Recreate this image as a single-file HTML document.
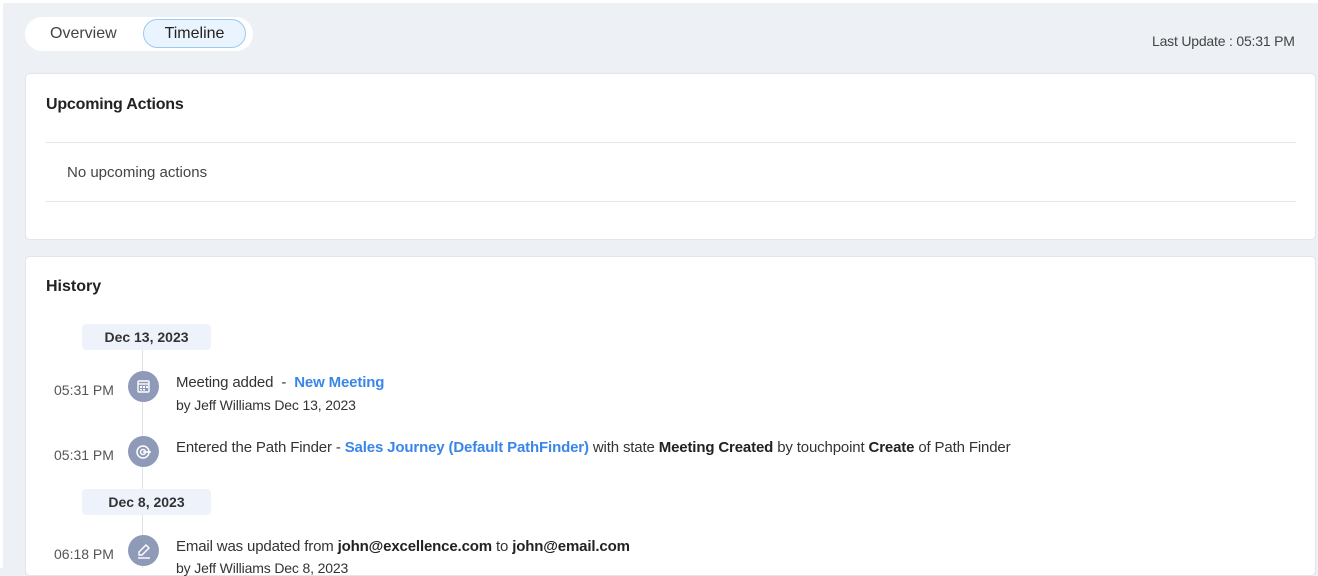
<!DOCTYPE html><html><head><style>
*{margin:0;padding:0;box-sizing:border-box}
body{width:1318px;height:568px;overflow:hidden;background:#edf0f5;font-family:"Liberation Sans",sans-serif;color:#222;position:relative}
.a{position:absolute;white-space:nowrap}
.card{position:absolute;left:25px;width:1291px;background:#fff;border:1px solid #e2e6ec;border-radius:5px}
.t{font-size:14px;color:#555}
.ic{position:absolute;left:128px;width:31px;height:31px;border-radius:50%;background:#8e9ab8}
.dt{position:absolute;left:82px;width:129px;height:26px;background:#eef3fb;border-radius:4px;font-size:14px;font-weight:bold;text-align:center;line-height:26px;color:#333}
.tx{font-size:15px;color:#333;letter-spacing:-0.15px}
b{color:#222}
.l{color:#3a86e8}
</style></head><body>
<div class="a" style="left:0;top:0;width:1318px;height:3px;background:#fff"></div>
<div class="a" style="left:0;top:0;width:3px;height:568px;background:#fff"></div>
<div class="a" style="left:25px;top:17px;width:228px;height:34px;background:#fff;border-radius:17px"></div>
<div class="a" style="left:50px;top:25px;font-size:16px;color:#444">Overview</div>
<div class="a" style="left:143px;top:19px;width:103px;height:29px;background:#eaf4fe;border:1px solid #9ccaf0;border-radius:15px;font-size:16px;text-align:center;line-height:28px;color:#222">Timeline</div>
<div class="a" style="left:1152px;top:33px;font-size:14px;color:#444;letter-spacing:-0.2px">Last Update : 05:31 PM</div>
<div class="card" style="top:73px;height:167px">
<div class="a" style="left:20px;top:22px;font-size:16px;font-weight:bold;letter-spacing:-0.2px">Upcoming Actions</div>
<div class="a" style="left:20px;top:68px;width:1250px;height:1px;background:#e2e6ec"></div>
<div class="a" style="left:41px;top:90px;font-size:15px;color:#444">No upcoming actions</div>
<div class="a" style="left:20px;top:127px;width:1250px;height:1px;background:#e2e6ec"></div>
</div>
<div class="card" style="top:256px;height:320px"></div>
<div class="a" style="left:46px;top:278px;font-size:16px;font-weight:bold">History</div>
<div class="a" style="left:142px;top:350px;width:1px;height:218px;background:#dde1e8"></div>
<div class="dt" style="top:324px">Dec 13, 2023</div>
<div class="a t" style="left:54px;top:382px">05:31 PM</div>
<div class="ic" style="top:371px"><svg width="31" height="31"><rect x="10" y="10" width="11" height="11" rx="1" fill="none" stroke="#fff" stroke-width="1.4"/><line x1="10" y1="13" x2="21" y2="13" stroke="#fff" stroke-width="1.4"/><g fill="#fff"><rect x="12" y="15" width="2" height="2"/><rect x="15" y="15" width="2" height="2"/><rect x="18" y="15" width="2" height="2"/><rect x="12" y="18" width="2" height="1.5"/><rect x="15" y="18" width="2" height="1.5"/></g></svg></div>
<div class="a tx" style="left:176px;top:374px">Meeting added &nbsp;- &nbsp;<span class="l" style="font-weight:bold">New Meeting</span></div>
<div class="a tx" style="left:176px;top:397px;font-size:14px">by Jeff Williams Dec 13, 2023</div>
<div class="a t" style="left:54px;top:447px">05:31 PM</div>
<div class="ic" style="top:436px"><svg width="31" height="31"><circle cx="15" cy="16" r="6" fill="none" stroke="#fff" stroke-width="1.5"/><circle cx="15" cy="16" r="2.5" fill="none" stroke="#fff" stroke-width="1.5"/><line x1="15" y1="16" x2="23" y2="16" stroke="#fff" stroke-width="1.5"/></svg></div>
<div class="a tx" style="left:176px;top:439px">Entered the Path Finder - <span class="l" style="font-weight:bold">Sales Journey (Default PathFinder)</span> with state <b>Meeting Created</b> by touchpoint <b>Create</b> of Path Finder</div>
<div class="dt" style="top:489px">Dec 8, 2023</div>
<div class="a t" style="left:54px;top:546px">06:18 PM</div>
<div class="ic" style="top:535px"><svg width="31" height="31"><path d="M11 20 L11 17 L18 10 L21 13 L14 20 Z" fill="none" stroke="#fff" stroke-width="1.4"/><line x1="10" y1="23" x2="22" y2="23" stroke="#fff" stroke-width="1.4"/></svg></div>
<div class="a tx" style="left:176px;top:538px">Email was updated from <b>john@excellence.com</b> to <b>john@email.com</b></div>
<div class="a tx" style="left:176px;top:560px;font-size:14px">by Jeff Williams Dec 8, 2023</div>
</body></html>
